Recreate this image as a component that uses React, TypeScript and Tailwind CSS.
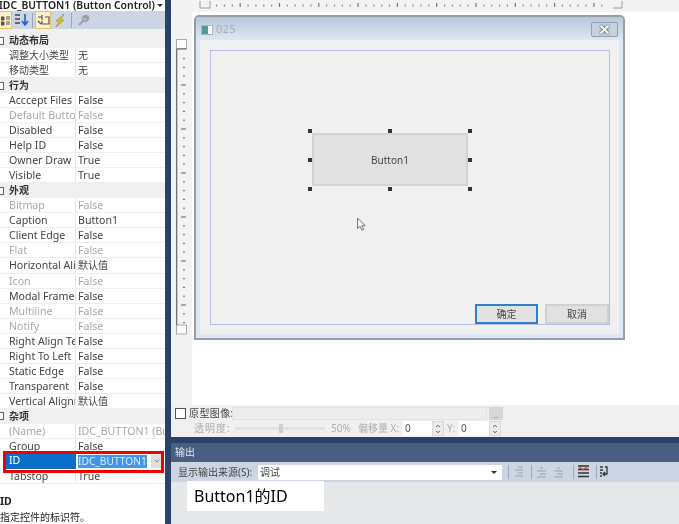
import React from 'react';
import { ChevronDown, ChevronUp, X } from 'lucide-react';

type Row = { name: string; value: string; off?: boolean; cat?: boolean; sel?: boolean };

const ROWS: Row[] = [
  { name: '动态布局', value: '', cat: true },
  { name: '调整大小类型', value: '无' },
  { name: '移动类型', value: '无' },
  { name: '行为', value: '', cat: true },
  { name: 'Acccept Files', value: 'False' },
  { name: 'Default Button', value: 'False', off: true },
  { name: 'Disabled', value: 'False' },
  { name: 'Help ID', value: 'False' },
  { name: 'Owner Draw', value: 'True' },
  { name: 'Visible', value: 'True' },
  { name: '外观', value: '', cat: true },
  { name: 'Bitmap', value: 'False', off: true },
  { name: 'Caption', value: 'Button1' },
  { name: 'Client Edge', value: 'False' },
  { name: 'Flat', value: 'False', off: true },
  { name: 'Horizontal Alignment', value: '默认值' },
  { name: 'Icon', value: 'False', off: true },
  { name: 'Modal Frame', value: 'False' },
  { name: 'Multiline', value: 'False', off: true },
  { name: 'Notify', value: 'False', off: true },
  { name: 'Right Align Text', value: 'False' },
  { name: 'Right To Left Reading', value: 'False' },
  { name: 'Static Edge', value: 'False' },
  { name: 'Transparent', value: 'False' },
  { name: 'Vertical Alignment', value: '默认值' },
  { name: '杂项', value: '', cat: true },
  { name: '(Name)', value: 'IDC_BUTTON1 (Button Control)', off: true },
  { name: 'Group', value: 'False' },
  { name: 'ID', value: 'IDC_BUTTON1', sel: true },
  { name: 'Tabstop', value: 'True' },
];

const isCjk = (s: string) => /[^\x00-\x7f]/.test(s);

const PropRow = ({ row }: { row: Row }) => {
  if (row.cat) {
    return (
      <div className="flex h-[15.04px] items-center bg-[#f0f0f0] text-[10px] text-[#333]">
        <div className="ml-[-4px] mr-[4px] h-[8px] w-[8px] border border-[#666] bg-white" />
        <span className="ml-[1px] font-bold">{row.name}</span>
      </div>
    );
  }
  const color = row.off ? 'text-[#a8a8a8]' : 'text-[#444]';
  if (row.sel) {
    return (
      <div className="flex h-[15.04px] items-center bg-white pl-[6px]">
        <div className="flex h-full w-[70px] items-center bg-[#0a6fc9] pl-[3px] text-white">{row.name}</div>
        <div className="ml-[2px] flex h-[13px] w-[69px] items-center overflow-hidden bg-[#3f96ea] text-[10.2px] whitespace-nowrap text-[#dcecff]">{row.value}</div>
        <div className="ml-[4px] flex h-[13px] w-[11px] items-center justify-center bg-[#dedede]">
          <ChevronDown size={8} strokeWidth={2} className="text-[#555]" />
        </div>
      </div>
    );
  }
  return (
    <div className={`flex h-[15.04px] items-center border-b border-[#efefef] bg-white pl-[6px] ${color}`}>
      <div className={`h-full w-[70px] overflow-hidden border-r border-[#e6e6e6] pl-[3px] leading-[14px] whitespace-nowrap ${isCjk(row.name) ? 'text-[10px]' : ''}`}>{row.name}</div>
      <div className={`h-full flex-1 overflow-hidden pl-[2px] leading-[14px] whitespace-nowrap ${isCjk(row.value) ? 'text-[10px]' : ''}`}>{row.value}</div>
    </div>
  );
};

const PropToolbar = () => (
  <div className="mt-px flex h-[19px] items-center bg-[#ccd5e3]">
    <div className="flex h-[18px] w-[12px] items-center justify-end border border-l-0 border-[#e5c365] bg-[#fdf0c4]">
      <svg width="10" height="11" viewBox="0 0 10 11">
        <path d="M0 2h3v3H0zM0 7h3v3H0zM5 2h4M5 4h4M5 7h4M5 9h4" fill="#555" stroke="#555" strokeWidth="1" />
      </svg>
    </div>
    <svg width="16" height="14" viewBox="0 0 16 14" className="ml-[2px]">
      <path d="M1 1h5v2H1zM1 5h5v2H1zM1 9h5v2H1z" fill="#666" />
      <path d="M11 1v10M8 8l3 4 3-4" fill="none" stroke="#1f62c0" strokeWidth="1.6" />
    </svg>
    <div className="mx-[2px] h-[15px] w-px bg-[#9aa5b8]" />
    <div className="flex h-[18px] w-[16px] items-center justify-center border border-[#e5c365] bg-[#fdf0c4]">
      <svg width="13" height="13" viewBox="0 0 13 13">
        <path d="M1 3h4M8 3h4v7H5V7M5 1v5M1 7l3 3" fill="none" stroke="#555" strokeWidth="1.2" />
      </svg>
    </div>
    <svg width="12" height="15" viewBox="0 0 12 15" className="ml-[3px]">
      <path d="M10 1 2 8h3.500L2 14l8-7H6.500z" fill="#e5c21c" stroke="#8f7a10" strokeWidth="0.5" />
    </svg>
    <div className="mx-[5px] h-[15px] w-px bg-[#9aa5b8]" />
    <svg width="13" height="13" viewBox="0 0 13 13">
      <path d="M2 11 7 6M6 6a3 3 0 0 1 4-4L8 4l1 1 2-2a3 3 0 0 1-4 4" fill="none" stroke="#9aa0aa" strokeWidth="1.8" />
    </svg>
  </div>
);

const PropertyPanel = () => (
  <div className="relative flex h-full w-[165px] shrink-0 flex-col overflow-hidden bg-white text-[10.6px]">
    <div className="flex h-[12px] items-center justify-between pr-[2px] text-[#222]">
      <span className="ml-[-1px] text-[10.4px] leading-[10px] whitespace-nowrap font-semibold">IDC_BUTTON1 (Button Control)</span>
      <div className="h-0 w-0 border-x-[3px] border-t-[3px] border-x-transparent border-t-[#333]" />
    </div>
    <PropToolbar />
    <div className="bg-[#f0f0f0] pt-[4px]">
      {ROWS.map((r) => (
        <PropRow key={r.name} row={r} />
      ))}
    </div>
    <div className="mt-[10px] flex flex-col pl-0 text-[#222]">
      <span className="font-bold leading-[15px]">ID</span>
      <span className="text-[10px] leading-[16px]">指定控件的标识符。</span>
    </div>
    <div className="absolute left-[3px] top-[451px] h-[22px] w-[161px] border-[3px] border-[#f00000]" />
  </div>
);

const RulerTop = () => (
  <svg width="428" height="12" viewBox="0 0 428 12" className="block">
    <path d="M1 1v7h10V1" fill="none" stroke="#888" strokeWidth="0.8" />
    {Array.from({ length: 50 }, (_, i) => {
      const x = 17 + i * 7.86;
      const big = i % 5 === 3;
      return <rect key={i} x={x} y={big ? 3 : 4.5} width="1.2" height={big ? 4 : 2} fill={big ? '#777' : '#888'} />;
    })}
    <path d="M414 8h9V1" fill="none" stroke="#888" strokeWidth="0.8" />
  </svg>
);

const RulerLeft = () => (
  <svg width="12" height="296" viewBox="0 0 12 296" className="block">
    <rect x="0.5" y="0.5" width="10" height="9" fill="#fff" stroke="#aaa" />
    <rect x="0.5" y="286" width="10" height="9" fill="#fff" stroke="#aaa" />
    <path d="M0.7 10h10M0.7 10v276" fill="none" stroke="#666" strokeWidth="1.2" />
    {Array.from({ length: 31 }, (_, i) => {
      const y = 19 + i * 8.8;
      const big = i % 5 === 3;
      return <rect key={i} x={big ? 5 : 7} y={y} width={big ? 5 : 2} height="1.2" fill="#777" />;
    })}
  </svg>
);

const Handle = ({ className }: { className: string }) => (
  <div className={`absolute h-[4px] w-[4px] bg-[#333] ${className}`} />
);

const DialogButton = ({ label, primary }: { label: string; primary?: boolean }) => (
  <div
    className={`flex h-[20px] items-center justify-center bg-[#e1e1e1] text-[10px] text-[#444] ${
      primary ? 'w-[63px] border-2 border-[#2f80c8]' : 'w-[64px] border-2 border-[#d0d0d0]'
    }`}
  >
    {label}
  </div>
);

const DialogPreview = () => (
  <div className="ml-[2px] flex h-[325px] w-[431px] flex-col rounded-t-[5px] border-2 border-[#9a9ea2] bg-[#dce8f3]">
    <div className="flex h-[23px] shrink-0 items-center justify-between rounded-t-[4px] bg-gradient-to-b from-[#b6c7da] to-[#dde8f1] pl-[5px] pr-[5px] pt-[2px]">
      <div className="flex items-center gap-[3px]">
        <div className="flex h-[10px] w-[12px] border border-[#a9b6c2] bg-white">
          <div className="h-full w-[6px] bg-[#4f9a96]" />
        </div>
        <span className="text-[11px] tracking-[0.3px] text-[#a5adb6]">025</span>
      </div>
      <div className="flex h-[15px] w-[27px] items-center justify-center rounded-[2px] border border-[#8fa0b2] bg-[#c6d2de]">
        <X size={13} strokeWidth={4} className="text-[#f4f4f4] drop-shadow-[0_0_1px_#222]" />
      </div>
    </div>
    <div className="mx-[4px] mb-[4px] flex-1 bg-[#f0f0f0] pl-[10px] pr-[9px] pt-[10px]">
      <div className="flex h-[275px] flex-col border border-[#bcbce8]">
        <div className="relative ml-[101px] mt-[82px] flex h-[53px] w-[156px] items-center justify-center border-2 border-[#d2d2d2] bg-[#e1e1e1] pt-[1px] text-[10px] text-[#444]">
          Button1
          <Handle className="left-[-6.500px] top-[-6.500px]" />
          <Handle className="left-[73.500px] top-[-6.500px]" />
          <Handle className="right-[-6px] top-[-6.500px]" />
          <Handle className="left-[-6.500px] top-[23px]" />
          <Handle className="right-[-6px] top-[23px]" />
          <Handle className="bottom-[-6.500px] left-[-6.500px]" />
          <Handle className="bottom-[-6.500px] left-[73.500px]" />
          <Handle className="bottom-[-6.500px] right-[-6px]" />
        </div>
        <svg width="11" height="15" viewBox="0 0 11 15" className="ml-[145px] mt-[31px]">
          <path d="M1.500 1v10.500l2.600-2.200 1.800 4 1.800-.8-1.800-3.800h3.300z" fill="#f4f4f4" stroke="#777" strokeWidth="1" />
        </svg>
        <div className="mt-auto flex justify-end gap-[7px]">
          <DialogButton label="确定" primary />
          <DialogButton label="取消" />
        </div>
      </div>
    </div>
  </div>
);

const SpinInput = ({ w }: { w: string }) => (
  <div className="flex h-[15px] items-stretch">
    <div className={`flex items-center bg-white pl-[2px] text-[#555] ${w}`}>0</div>
    <div className="flex w-[12px] flex-col items-center justify-center border border-[#d8d8d8] bg-[#ebebeb] text-[#555]">
      <ChevronUp size={6} strokeWidth={4} />
      <ChevronDown size={6} strokeWidth={4} />
    </div>
  </div>
);

const PrototypeBar = () => (
  <div className="flex h-[32px] shrink-0 flex-col bg-[#f0f0f0] pl-[4px] text-[10px]">
    <div className="flex h-[15px] items-center pt-[1px]">
      <div className="h-[11px] w-[11px] border border-[#555] bg-white" />
      <span className="ml-[3px] w-[43px] text-[10px] tracking-[0.4px] whitespace-nowrap text-[#444]">原型图像:</span>
      <div className="h-[13px] w-[255px] border border-[#e2e2e2] bg-[#ededed]" />
      <div className="ml-[2px] flex h-[13px] w-[14px] items-end justify-center bg-[#d6d6d6] text-[8px] leading-[10px] text-[#777]">..</div>
    </div>
    <div className="mt-[1px] flex h-[15px] items-center text-[#aeaeae]">
      <span className="ml-[19px] w-[41px] tracking-[1px] whitespace-nowrap">透明度:</span>
      <div className="relative h-[3px] w-[90px] bg-[#e2e2e2]">
        <div className="absolute left-[44px] top-[-3px] h-[9px] w-[4px] bg-[#cfcfcf]" />
      </div>
      <span className="ml-[6px] w-[27px]">50%</span>
      <span className="w-[45px] whitespace-nowrap">偏移量 X:</span>
      <SpinInput w="w-[29px]" />
      <span className="ml-[3px] w-[12px]">Y:</span>
      <SpinInput w="w-[30px]" />
    </div>
  </div>
);

const OutputToolbar = () => (
  <div className="flex h-[20px] shrink-0 items-center bg-[#ccd5e3] text-[10px] text-[#444]">
    <span className="ml-[7px] w-[80px] whitespace-nowrap">显示输出来源(S):</span>
    <div className="flex h-[15px] w-[244px] items-center justify-between bg-white pl-[2px] pr-[5px]">
      <span>调试</span>
      <div className="h-0 w-0 border-x-[3px] border-t-[3px] border-x-transparent border-t-[#333]" />
    </div>
    <div className="ml-[6px] h-[14px] w-px bg-[#a0abbc]" />
    <svg width="96" height="14" viewBox="0 0 96 14" className="ml-[3px]">
      <path d="M6 2h5M3 5h8M6 8h5M3 11h8" stroke="#aab3c1" strokeWidth="1.4" />
      <rect x="19" y="0" width="1" height="14" fill="#a0abbc" />
      <path d="M28 3h3M25 6h9M28 9h6M25 12h9" stroke="#aab3c1" strokeWidth="1.3" />
      <path d="M45 3h3M42 6h9M45 9h6M42 12h9" stroke="#aab3c1" strokeWidth="1.3" />
      <rect x="61" y="0" width="1" height="14" fill="#a0abbc" />
      <path d="M66 1h11M66 4.500h11M66 8h11M66 11.500h11" stroke="#333" strokeWidth="1.3" />
      <path d="M67 2l4 3 4-3" fill="none" stroke="#d8402a" strokeWidth="1.2" />
      <rect x="84" y="0" width="1" height="14" fill="#a0abbc" />
      <path d="M88 2h3M88 5h3M88 8h2M88 11h2M93 2h2v7h-4M93 7l-2 2 2 2" fill="none" stroke="#333" strokeWidth="1.3" />
    </svg>
  </div>
);

const OutputPanel = () => (
  <div className="relative flex min-h-0 flex-1 flex-col">
    <div className="flex h-[19px] shrink-0 items-center bg-[#4a5f82] pl-[4px] text-[10px] text-[#e3e8f0]">输出</div>
    <OutputToolbar />
    <div className="flex-1 bg-[#e6e7e9]" />
    <div className="absolute left-[16px] top-[38px] flex h-[30px] w-[137px] items-center bg-white pl-[7px] text-[16px] text-black">Button1的ID</div>
  </div>
);

export default function App() {
  return (
    <div
      className="flex h-[524px] w-[679px] overflow-hidden bg-white blur-[0.35px]"
      style={{ fontFamily: '"Noto Sans", "Noto Sans CJK SC", sans-serif' }}
    >
      <PropertyPanel />
      <div className="h-full w-[6px] shrink-0 bg-[#2b4169]" />
      <div className="flex min-w-0 flex-1 flex-col">
        <div className="flex h-[405px] shrink-0 flex-col">
          <div className="flex h-[12px] shrink-0 items-start bg-[#f3f3f3] pl-[28px]">
            <RulerTop />
          </div>
          <div className="flex min-h-0 flex-1">
            <div className="w-[21px] shrink-0 bg-[#f3f3f3] pl-[5px] pt-[27px]">
              <RulerLeft />
            </div>
            <div className="flex-1 bg-white pt-[3px]">
              <DialogPreview />
            </div>
          </div>
        </div>
        <PrototypeBar />
        <div className="h-[6px] shrink-0 bg-[#2b4169]" />
        <OutputPanel />
      </div>
    </div>
  );
}
